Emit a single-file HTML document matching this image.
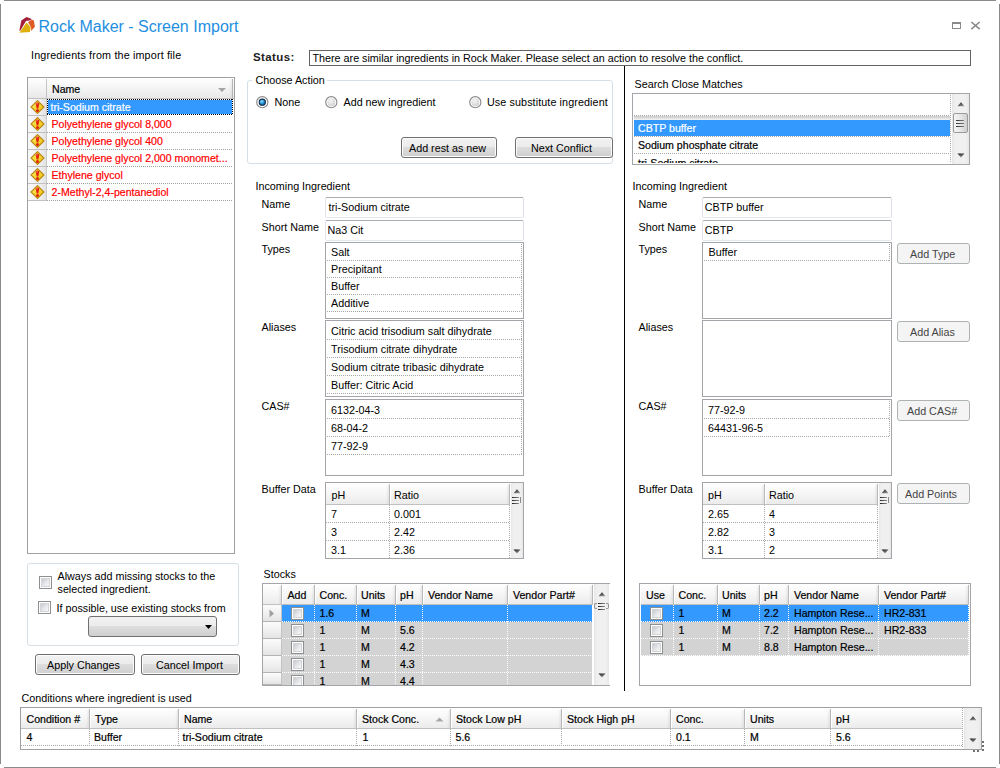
<!DOCTYPE html>
<html><head><meta charset="utf-8"><style>
html,body{margin:0;padding:0;width:1000px;height:768px;overflow:hidden;background:#fff;position:relative}
.a{position:absolute}
.u{position:absolute;font-family:"Liberation Sans",sans-serif;font-size:10.75px;line-height:10.75px;white-space:nowrap;color:#000}
.g{position:absolute;font-family:"Liberation Sans",sans-serif;font-size:10.6px;line-height:10.6px;white-space:nowrap;color:#000;-webkit-text-stroke:0.2px currentColor}
div{font-family:"Liberation Sans",sans-serif}
</style></head><body>
<div class="a" style="left:4px;top:0px;width:992px;height:1px;background:#8a8a8a"></div>
<div class="a" style="left:4px;top:767px;width:992px;height:1px;background:#8a8a8a"></div>
<div class="a" style="left:0px;top:4px;width:1px;height:760px;background:#8a8a8a"></div>
<div class="a" style="left:999px;top:4px;width:1px;height:760px;background:#8a8a8a"></div>
<svg class="a" style="left:17px;top:15px" width="20" height="20" viewBox="0 0 20 20">
<polygon points="2.3,15.8 4.3,5.6 9.5,2.1 14.8,4.1 13.6,5.2 9,6.1 3.4,15.6" fill="#a21f3c"/>
<polygon points="11,7.1 15,4.8 16.9,5.5 17.9,11.8 14.2,15.9 14.1,12.4" fill="#e05a24"/>
<polygon points="2.4,17.7 9.5,7.6 13.6,12.3 13,17.1" fill="#ddb00d"/>
</svg>
<div class="a" style="left:38.5px;top:16.5px;font-size:16px;color:#1e8fe0;white-space:nowrap;line-height:19px">Rock Maker - Screen Import</div>
<div class="a" style="left:952px;top:22px;width:9px;height:7px;border:1px solid #8a8a8a;border-top-width:2px;box-sizing:border-box"></div>
<svg class="a" style="left:970px;top:21px" width="11" height="9" viewBox="0 0 11 9"><path d="M1.3 1 L9.7 8.2 M9.7 1 L1.3 8.2" stroke="#8a8a8a" stroke-width="1.6"/></svg>
<div class="u" style="left:31px;top:50.00px;letter-spacing:0.16px">Ingredients from the import file</div>
<div class="a" style="left:27px;top:77px;width:208px;height:477px;border:1px solid #a0a0a0;box-sizing:border-box;background:#fff"></div>
<div class="a" style="left:28px;top:78px;width:206px;height:21px;background:linear-gradient(#ffffff,#f4f4f4 50%,#e8e8e8);border-bottom:1px solid #c0c0c0;box-sizing:border-box"></div>
<div class="a" style="left:46px;top:79px;width:1px;height:19px;background:#c4c4c4"></div>
<div class="a" style="left:229px;top:79px;width:3px;height:19px;background:linear-gradient(90deg,rgba(0,0,0,0),rgba(0,0,0,0.06))"></div>
<div class="a" style="left:232px;top:79px;width:1px;height:19px;background:#b4b4b4"></div>
<div class="g" style="left:52px;top:84.00px;">Name</div>
<svg class="a" style="left:217.5px;top:88px" width="9" height="5"><path d="M0 0 L8 0 L4 4 Z" fill="#a4a4a4"/></svg>
<div class="a" style="left:28px;top:99px;width:19px;height:17px;background:linear-gradient(90deg,#f8f8f8,#eeeeee 70%,#e2e2e2);border-bottom:1px solid #c0c0c0;border-right:1px solid #c8c8c8;box-sizing:border-box"></div>
<svg class="a" style="left:30px;top:100px" width="15" height="14" viewBox="0 0 15 14"><defs><linearGradient id="wg0" x1="0" y1="0" x2="1" y2="1"><stop offset="0" stop-color="#fff36a"/><stop offset="1" stop-color="#e8b800"/></linearGradient></defs><polygon points="7.5,0.6 14,7 7.5,13.4 1,7" fill="url(#wg0)" stroke="#b88410" stroke-width="1.1"/><path d="M5.6 3.6 Q7.5 1.6 9.4 3.6 L8.3 8.4 L6.7 8.4 Z" fill="#e2200e"/><circle cx="7.5" cy="10.4" r="1.5" fill="#e2200e"/><ellipse cx="7" cy="3.8" rx="0.8" ry="0.6" fill="#ff9a80"/></svg>
<div class="a" style="left:47px;top:99px;width:186px;height:16px;background:#3399ff"></div>
<div class="a" style="left:47px;top:99px;width:186px;height:16px;border:1px solid #fff;box-sizing:border-box"></div>
<div class="a" style="left:47px;top:99px;width:186px;height:1px;background:repeating-linear-gradient(90deg,#000 0 1px,transparent 1px 2px)"></div>
<div class="a" style="left:47px;top:114px;width:186px;height:1px;background:repeating-linear-gradient(90deg,#000 0 1px,transparent 1px 2px)"></div>
<div class="a" style="left:47px;top:99px;width:1px;height:16px;background:repeating-linear-gradient(180deg,#000 0 1px,transparent 1px 2px)"></div>
<div class="a" style="left:232px;top:99px;width:1px;height:16px;background:repeating-linear-gradient(180deg,#000 0 1px,transparent 1px 2px)"></div>
<div class="g" style="left:50.5px;top:102.00px;color:#fff">tri-Sodium citrate</div>
<div class="a" style="left:28px;top:116px;width:19px;height:17px;background:linear-gradient(90deg,#f8f8f8,#eeeeee 70%,#e2e2e2);border-bottom:1px solid #c0c0c0;border-right:1px solid #c8c8c8;box-sizing:border-box"></div>
<svg class="a" style="left:30px;top:117px" width="15" height="14" viewBox="0 0 15 14"><defs><linearGradient id="wg1" x1="0" y1="0" x2="1" y2="1"><stop offset="0" stop-color="#fff36a"/><stop offset="1" stop-color="#e8b800"/></linearGradient></defs><polygon points="7.5,0.6 14,7 7.5,13.4 1,7" fill="url(#wg1)" stroke="#b88410" stroke-width="1.1"/><path d="M5.6 3.6 Q7.5 1.6 9.4 3.6 L8.3 8.4 L6.7 8.4 Z" fill="#e2200e"/><circle cx="7.5" cy="10.4" r="1.5" fill="#e2200e"/><ellipse cx="7" cy="3.8" rx="0.8" ry="0.6" fill="#ff9a80"/></svg>
<div class="a" style="left:47px;top:132px;width:186px;height:1px;background:repeating-linear-gradient(90deg,#a0a0a0 0 1px,transparent 1px 2px)"></div>
<div class="g" style="left:51.5px;top:119.00px;color:#ff0000">Polyethylene glycol 8,000</div>
<div class="a" style="left:28px;top:133px;width:19px;height:17px;background:linear-gradient(90deg,#f8f8f8,#eeeeee 70%,#e2e2e2);border-bottom:1px solid #c0c0c0;border-right:1px solid #c8c8c8;box-sizing:border-box"></div>
<svg class="a" style="left:30px;top:134px" width="15" height="14" viewBox="0 0 15 14"><defs><linearGradient id="wg2" x1="0" y1="0" x2="1" y2="1"><stop offset="0" stop-color="#fff36a"/><stop offset="1" stop-color="#e8b800"/></linearGradient></defs><polygon points="7.5,0.6 14,7 7.5,13.4 1,7" fill="url(#wg2)" stroke="#b88410" stroke-width="1.1"/><path d="M5.6 3.6 Q7.5 1.6 9.4 3.6 L8.3 8.4 L6.7 8.4 Z" fill="#e2200e"/><circle cx="7.5" cy="10.4" r="1.5" fill="#e2200e"/><ellipse cx="7" cy="3.8" rx="0.8" ry="0.6" fill="#ff9a80"/></svg>
<div class="a" style="left:47px;top:149px;width:186px;height:1px;background:repeating-linear-gradient(90deg,#a0a0a0 0 1px,transparent 1px 2px)"></div>
<div class="g" style="left:51.5px;top:136.00px;color:#ff0000">Polyethylene glycol 400</div>
<div class="a" style="left:28px;top:150px;width:19px;height:17px;background:linear-gradient(90deg,#f8f8f8,#eeeeee 70%,#e2e2e2);border-bottom:1px solid #c0c0c0;border-right:1px solid #c8c8c8;box-sizing:border-box"></div>
<svg class="a" style="left:30px;top:151px" width="15" height="14" viewBox="0 0 15 14"><defs><linearGradient id="wg3" x1="0" y1="0" x2="1" y2="1"><stop offset="0" stop-color="#fff36a"/><stop offset="1" stop-color="#e8b800"/></linearGradient></defs><polygon points="7.5,0.6 14,7 7.5,13.4 1,7" fill="url(#wg3)" stroke="#b88410" stroke-width="1.1"/><path d="M5.6 3.6 Q7.5 1.6 9.4 3.6 L8.3 8.4 L6.7 8.4 Z" fill="#e2200e"/><circle cx="7.5" cy="10.4" r="1.5" fill="#e2200e"/><ellipse cx="7" cy="3.8" rx="0.8" ry="0.6" fill="#ff9a80"/></svg>
<div class="a" style="left:47px;top:166px;width:186px;height:1px;background:repeating-linear-gradient(90deg,#a0a0a0 0 1px,transparent 1px 2px)"></div>
<div class="g" style="left:51.5px;top:153.00px;color:#ff0000">Polyethylene glycol 2,000 monomet...</div>
<div class="a" style="left:28px;top:167px;width:19px;height:17px;background:linear-gradient(90deg,#f8f8f8,#eeeeee 70%,#e2e2e2);border-bottom:1px solid #c0c0c0;border-right:1px solid #c8c8c8;box-sizing:border-box"></div>
<svg class="a" style="left:30px;top:168px" width="15" height="14" viewBox="0 0 15 14"><defs><linearGradient id="wg4" x1="0" y1="0" x2="1" y2="1"><stop offset="0" stop-color="#fff36a"/><stop offset="1" stop-color="#e8b800"/></linearGradient></defs><polygon points="7.5,0.6 14,7 7.5,13.4 1,7" fill="url(#wg4)" stroke="#b88410" stroke-width="1.1"/><path d="M5.6 3.6 Q7.5 1.6 9.4 3.6 L8.3 8.4 L6.7 8.4 Z" fill="#e2200e"/><circle cx="7.5" cy="10.4" r="1.5" fill="#e2200e"/><ellipse cx="7" cy="3.8" rx="0.8" ry="0.6" fill="#ff9a80"/></svg>
<div class="a" style="left:47px;top:183px;width:186px;height:1px;background:repeating-linear-gradient(90deg,#a0a0a0 0 1px,transparent 1px 2px)"></div>
<div class="g" style="left:51.5px;top:170.00px;color:#ff0000">Ethylene glycol</div>
<div class="a" style="left:28px;top:184px;width:19px;height:17px;background:linear-gradient(90deg,#f8f8f8,#eeeeee 70%,#e2e2e2);border-bottom:1px solid #c0c0c0;border-right:1px solid #c8c8c8;box-sizing:border-box"></div>
<svg class="a" style="left:30px;top:185px" width="15" height="14" viewBox="0 0 15 14"><defs><linearGradient id="wg5" x1="0" y1="0" x2="1" y2="1"><stop offset="0" stop-color="#fff36a"/><stop offset="1" stop-color="#e8b800"/></linearGradient></defs><polygon points="7.5,0.6 14,7 7.5,13.4 1,7" fill="url(#wg5)" stroke="#b88410" stroke-width="1.1"/><path d="M5.6 3.6 Q7.5 1.6 9.4 3.6 L8.3 8.4 L6.7 8.4 Z" fill="#e2200e"/><circle cx="7.5" cy="10.4" r="1.5" fill="#e2200e"/><ellipse cx="7" cy="3.8" rx="0.8" ry="0.6" fill="#ff9a80"/></svg>
<div class="a" style="left:47px;top:200px;width:186px;height:1px;background:repeating-linear-gradient(90deg,#a0a0a0 0 1px,transparent 1px 2px)"></div>
<div class="g" style="left:51.5px;top:187.00px;color:#ff0000">2-Methyl-2,4-pentanediol</div>
<div class="a" style="left:27px;top:563px;width:212px;height:83px;border:1px solid #d5dfe5;border-radius:3px;box-sizing:border-box"></div>
<div class="a" style="left:39px;top:576px;width:13px;height:13px;border:1px solid #8e8f8f;box-sizing:border-box;background:#fff"></div>
<div class="a" style="left:41px;top:578px;width:9px;height:9px;background:linear-gradient(135deg,#c6cad0,#e9eaec 60%,#f6f6f7);border:1px solid #d2d4d8;box-sizing:border-box"></div>
<div class="u" style="left:57.5px;top:571.00px;">Always add missing stocks to the</div>
<div class="u" style="left:57.5px;top:584.00px;">selected ingredient.</div>
<div class="a" style="left:38px;top:601px;width:13px;height:13px;border:1px solid #8e8f8f;box-sizing:border-box;background:#fff"></div>
<div class="a" style="left:40px;top:603px;width:9px;height:9px;background:linear-gradient(135deg,#c6cad0,#e9eaec 60%,#f6f6f7);border:1px solid #d2d4d8;box-sizing:border-box"></div>
<div class="u" style="left:56.5px;top:603.00px;">If possible, use existing stocks from</div>
<div class="a" style="left:88px;top:616px;width:129px;height:21px;border:1px solid #707070;border-radius:3px;box-sizing:border-box;background:linear-gradient(#f2f2f2 0,#ebebeb 50%,#dddddd 50%,#cfcfcf)"></div>
<svg class="a" style="left:205px;top:625px" width="8" height="5"><path d="M0 0 L7 0 L3.5 4 Z" fill="#000"/></svg>
<div class="a" style="left:35px;top:654px;width:100px;height:21px;border:1px solid #707070;border-radius:3px;box-sizing:border-box;background:linear-gradient(#f2f2f2 0,#ebebeb 50%,#dddddd 50%,#cfcfcf);box-shadow:inset 0 0 0 1px #fcfcfc"></div>
<div class="u" style="left:47px;top:660.00px;">Apply Changes</div>
<div class="a" style="left:141px;top:654px;width:99px;height:21px;border:1px solid #707070;border-radius:3px;box-sizing:border-box;background:linear-gradient(#f2f2f2 0,#ebebeb 50%,#dddddd 50%,#cfcfcf);box-shadow:inset 0 0 0 1px #fcfcfc"></div>
<div class="u" style="left:156px;top:660.00px;">Cancel Import</div>
<div class="u" style="left:21.5px;top:693.00px;">Conditions where ingredient is used</div>
<div class="a" style="left:253px;top:51px;font-family:Liberation Sans;font-size:11.5px;line-height:12px;font-weight:bold;letter-spacing:0.4px;color:#222;white-space:nowrap">Status:</div>
<div class="a" style="left:309px;top:50px;width:662px;height:16px;border:1px solid #646464;box-sizing:border-box"></div>
<div class="u" style="left:312.5px;top:53.00px;">There are similar ingredients in Rock Maker. Please select an action to resolve the conflict.</div>
<div class="a" style="left:247px;top:80px;width:366px;height:84px;border:1px solid #d5dfe5;border-radius:3px;box-sizing:border-box"></div>
<div class="a" style="left:252px;top:72px;width:75px;height:14px;background:#fff"></div>
<div class="u" style="left:255.5px;top:75.00px;">Choose Action</div>
<svg width="0" height="0" style="position:absolute"><defs><radialGradient id="rg" cx="0.4" cy="0.35" r="0.7"><stop offset="0" stop-color="#8fe0ff"/><stop offset="0.6" stop-color="#1a8fd8"/><stop offset="1" stop-color="#0f4d7a"/></radialGradient><radialGradient id="rg2" cx="0.4" cy="0.35" r="0.7"><stop offset="0" stop-color="#f5f5f5"/><stop offset="1" stop-color="#d0d0d0"/></radialGradient></defs></svg>
<svg class="a" style="left:256px;top:96px" width="13" height="13" viewBox="0 0 13 13"><circle cx="6.3" cy="6.2" r="5.6" fill="#fff" stroke="#8a8a8a" stroke-width="1.1"/><circle cx="6.3" cy="6.2" r="3.1" fill="url(#rg)" stroke="#15314d" stroke-width="1.1"/></svg>
<div class="u" style="left:274.5px;top:97.00px;">None</div>
<svg class="a" style="left:325px;top:96px" width="13" height="13" viewBox="0 0 13 13"><circle cx="6.3" cy="6.2" r="5.6" fill="#fff" stroke="#8a8a8a" stroke-width="1.1"/><circle cx="6.3" cy="6.2" r="4" fill="url(#rg2)"/></svg>
<div class="u" style="left:343.5px;top:97.00px;">Add new ingredient</div>
<svg class="a" style="left:469px;top:96px" width="13" height="13" viewBox="0 0 13 13"><circle cx="6.3" cy="6.2" r="5.6" fill="#fff" stroke="#8a8a8a" stroke-width="1.1"/><circle cx="6.3" cy="6.2" r="4" fill="url(#rg2)"/></svg>
<div class="u" style="left:487px;top:97.00px;letter-spacing:0.1px">Use substitute ingredient</div>
<div class="a" style="left:401px;top:137px;width:96px;height:21px;border:1px solid #707070;border-radius:3px;box-sizing:border-box;background:linear-gradient(#f2f2f2 0,#ebebeb 50%,#dddddd 50%,#cfcfcf);box-shadow:inset 0 0 0 1px #fcfcfc"></div>
<div class="u" style="left:409px;top:143.00px;">Add rest as new</div>
<div class="a" style="left:515px;top:137px;width:98px;height:21px;border:1px solid #707070;border-radius:3px;box-sizing:border-box;background:linear-gradient(#f2f2f2 0,#ebebeb 50%,#dddddd 50%,#cfcfcf);box-shadow:inset 0 0 0 1px #fcfcfc"></div>
<div class="u" style="left:531px;top:143.00px;">Next Conflict</div>
<div class="a" style="left:624px;top:66px;width:1px;height:625px;background:#000"></div>
<div class="u" style="left:255.5px;top:181.00px;">Incoming Ingredient</div>
<div class="u" style="left:261.5px;top:199.00px;">Name</div>
<div class="a" style="left:325px;top:197px;width:199px;height:21px;border:1px solid;border-color:#abadb3 #dbdfe6 #e3e9ef #e2e3ea;border-radius:2px;box-sizing:border-box;background:#fff"></div>
<div class="u" style="left:328.5px;top:202.00px;">tri-Sodium citrate</div>
<div class="u" style="left:261.5px;top:222.00px;">Short Name</div>
<div class="a" style="left:325px;top:220px;width:199px;height:21px;border:1px solid;border-color:#abadb3 #dbdfe6 #e3e9ef #e2e3ea;border-radius:2px;box-sizing:border-box;background:#fff"></div>
<div class="u" style="left:327.5px;top:225.00px;">Na3 Cit</div>
<div class="u" style="left:261.5px;top:244.00px;">Types</div>
<div class="a" style="left:325px;top:242px;width:199px;height:77px;border:1px solid #a3a5ab;box-sizing:border-box;background:#fff"></div>
<div class="u" style="left:331px;top:247.00px;">Salt</div>
<div class="a" style="left:327px;top:260px;width:195px;height:1px;background:repeating-linear-gradient(90deg,#a8a8a8 0 1px,transparent 1px 2px)"></div>
<div class="u" style="left:331px;top:264.00px;">Precipitant</div>
<div class="a" style="left:327px;top:277px;width:195px;height:1px;background:repeating-linear-gradient(90deg,#a8a8a8 0 1px,transparent 1px 2px)"></div>
<div class="u" style="left:331px;top:281.00px;">Buffer</div>
<div class="a" style="left:327px;top:294px;width:195px;height:1px;background:repeating-linear-gradient(90deg,#a8a8a8 0 1px,transparent 1px 2px)"></div>
<div class="u" style="left:331px;top:298.00px;">Additive</div>
<div class="a" style="left:327px;top:311px;width:195px;height:1px;background:repeating-linear-gradient(90deg,#a8a8a8 0 1px,transparent 1px 2px)"></div>
<div class="a" style="left:521px;top:244px;width:1px;height:68px;background:repeating-linear-gradient(180deg,#a8a8a8 0 1px,transparent 1px 2px)"></div>
<div class="u" style="left:261.5px;top:322.00px;">Aliases</div>
<div class="a" style="left:325px;top:320px;width:199px;height:77px;border:1px solid #a3a5ab;box-sizing:border-box;background:#fff"></div>
<div class="u" style="left:331px;top:326.00px;">Citric acid trisodium salt dihydrate</div>
<div class="a" style="left:327px;top:339px;width:195px;height:1px;background:repeating-linear-gradient(90deg,#a8a8a8 0 1px,transparent 1px 2px)"></div>
<div class="u" style="left:331px;top:344.00px;">Trisodium citrate dihydrate</div>
<div class="a" style="left:327px;top:357px;width:195px;height:1px;background:repeating-linear-gradient(90deg,#a8a8a8 0 1px,transparent 1px 2px)"></div>
<div class="u" style="left:331px;top:362.00px;">Sodium citrate tribasic dihydrate</div>
<div class="a" style="left:327px;top:375px;width:195px;height:1px;background:repeating-linear-gradient(90deg,#a8a8a8 0 1px,transparent 1px 2px)"></div>
<div class="u" style="left:331px;top:380.00px;">Buffer: Citric Acid</div>
<div class="a" style="left:327px;top:393px;width:195px;height:1px;background:repeating-linear-gradient(90deg,#a8a8a8 0 1px,transparent 1px 2px)"></div>
<div class="a" style="left:521px;top:322px;width:1px;height:72px;background:repeating-linear-gradient(180deg,#a8a8a8 0 1px,transparent 1px 2px)"></div>
<div class="u" style="left:261.5px;top:401.00px;">CAS#</div>
<div class="a" style="left:325px;top:399px;width:199px;height:77px;border:1px solid #a3a5ab;box-sizing:border-box;background:#fff"></div>
<div class="u" style="left:331px;top:405.00px;">6132-04-3</div>
<div class="a" style="left:327px;top:418px;width:195px;height:1px;background:repeating-linear-gradient(90deg,#a8a8a8 0 1px,transparent 1px 2px)"></div>
<div class="u" style="left:331px;top:423.00px;">68-04-2</div>
<div class="a" style="left:327px;top:436px;width:195px;height:1px;background:repeating-linear-gradient(90deg,#a8a8a8 0 1px,transparent 1px 2px)"></div>
<div class="u" style="left:331px;top:441.00px;">77-92-9</div>
<div class="a" style="left:327px;top:454px;width:195px;height:1px;background:repeating-linear-gradient(90deg,#a8a8a8 0 1px,transparent 1px 2px)"></div>
<div class="a" style="left:521px;top:401px;width:1px;height:54px;background:repeating-linear-gradient(180deg,#a8a8a8 0 1px,transparent 1px 2px)"></div>
<div class="u" style="left:261.5px;top:484.00px;">Buffer Data</div>
<div class="a" style="left:325px;top:482px;width:199px;height:77px;border:1px solid #a3a5ab;box-sizing:border-box;background:#fff"></div>
<div class="a" style="left:326px;top:483px;width:184px;height:22px;background:linear-gradient(#ffffff,#f7f7f7 45%,#ebebeb 100%);border-bottom:1px solid #c0c0c0;box-sizing:border-box"></div>
<div class="a" style="left:386px;top:485px;width:3px;height:19px;background:linear-gradient(90deg,rgba(0,0,0,0),rgba(0,0,0,0.07))"></div>
<div class="a" style="left:389px;top:484px;width:1px;height:20px;background:#b8b8b8"></div>
<div class="a" style="left:390px;top:484px;width:1px;height:20px;background:#ffffff"></div>
<div class="a" style="left:506px;top:485px;width:3px;height:19px;background:linear-gradient(90deg,rgba(0,0,0,0),rgba(0,0,0,0.07))"></div>
<div class="a" style="left:509px;top:484px;width:1px;height:20px;background:#b8b8b8"></div>
<div class="a" style="left:510px;top:484px;width:1px;height:20px;background:#ffffff"></div>
<div class="u" style="left:331.5px;top:490.00px;">pH</div>
<div class="u" style="left:394px;top:490.00px;">Ratio</div>
<div class="u" style="left:331px;top:509.00px;">7</div>
<div class="u" style="left:394px;top:509.00px;">0.001</div>
<div class="a" style="left:326px;top:522px;width:184px;height:1px;background:repeating-linear-gradient(90deg,#a8a8a8 0 1px,transparent 1px 2px)"></div>
<div class="u" style="left:331px;top:527.00px;">3</div>
<div class="u" style="left:394px;top:527.00px;">2.42</div>
<div class="a" style="left:326px;top:540px;width:184px;height:1px;background:repeating-linear-gradient(90deg,#a8a8a8 0 1px,transparent 1px 2px)"></div>
<div class="u" style="left:331px;top:545.00px;">3.1</div>
<div class="u" style="left:394px;top:545.00px;">2.36</div>
<div class="a" style="left:389px;top:505px;width:1px;height:53px;background:repeating-linear-gradient(180deg,#a8a8a8 0 1px,transparent 1px 2px)"></div>
<div class="a" style="left:511px;top:483px;width:12px;height:75px;background:linear-gradient(90deg,#e6e6e6,#f0f0f0 20%,#f0f0f0 80%,#e6e6e6)"></div>
<svg class="a" style="left:513.0px;top:489px" width="8" height="5"><defs><linearGradient id="ua489" x1="0" y1="0" x2="0.6" y2="1"><stop offset="0" stop-color="#101010"/><stop offset="1" stop-color="#909090"/></linearGradient></defs><path d="M0.5 4.3 L4 0.3 L7.5 4.3 Z" fill="url(#ua489)"/></svg>
<svg class="a" style="left:513.0px;top:549px" width="8" height="5"><defs><linearGradient id="da549" x1="0" y1="0" x2="0.6" y2="1"><stop offset="0" stop-color="#101010"/><stop offset="1" stop-color="#a0a0a0"/></linearGradient></defs><path d="M0.5 0.5 L7.5 0.5 L4 4.5 Z" fill="url(#da549)"/></svg>
<div class="a" style="left:512px;top:497px;width:7px;height:1px;background:linear-gradient(90deg,#202020,#909090)"></div>
<div class="a" style="left:512px;top:500px;width:7px;height:1px;background:linear-gradient(90deg,#202020,#909090)"></div>
<div class="a" style="left:512px;top:503px;width:7px;height:1px;background:linear-gradient(90deg,#202020,#909090)"></div>
<div class="a" style="left:520px;top:497px;width:1px;height:6px;background:#8a8a8a"></div>
<div class="a" style="left:509px;top:505px;width:1px;height:53px;background:repeating-linear-gradient(180deg,#a8a8a8 0 1px,transparent 1px 2px)"></div>
<div class="u" style="left:263.5px;top:569.00px;">Stocks</div>
<div class="a" style="left:262px;top:583px;width:348px;height:103px;border:1px solid #a3a5ab;border-right:none;box-sizing:border-box;background:#fff"></div>
<div class="a" style="left:263px;top:584px;width:330px;height:21px;background:linear-gradient(#ffffff,#f7f7f7 45%,#ebebeb 100%);border-bottom:1px solid #c0c0c0;box-sizing:border-box"></div>
<div class="a" style="left:278px;top:586px;width:3px;height:18px;background:linear-gradient(90deg,rgba(0,0,0,0),rgba(0,0,0,0.07))"></div>
<div class="a" style="left:281px;top:585px;width:1px;height:19px;background:#b8b8b8"></div>
<div class="a" style="left:282px;top:585px;width:1px;height:19px;background:#ffffff"></div>
<div class="a" style="left:311px;top:586px;width:3px;height:18px;background:linear-gradient(90deg,rgba(0,0,0,0),rgba(0,0,0,0.07))"></div>
<div class="a" style="left:314px;top:585px;width:1px;height:19px;background:#b8b8b8"></div>
<div class="a" style="left:315px;top:585px;width:1px;height:19px;background:#ffffff"></div>
<div class="a" style="left:353px;top:586px;width:3px;height:18px;background:linear-gradient(90deg,rgba(0,0,0,0),rgba(0,0,0,0.07))"></div>
<div class="a" style="left:356px;top:585px;width:1px;height:19px;background:#b8b8b8"></div>
<div class="a" style="left:357px;top:585px;width:1px;height:19px;background:#ffffff"></div>
<div class="a" style="left:392px;top:586px;width:3px;height:18px;background:linear-gradient(90deg,rgba(0,0,0,0),rgba(0,0,0,0.07))"></div>
<div class="a" style="left:395px;top:585px;width:1px;height:19px;background:#b8b8b8"></div>
<div class="a" style="left:396px;top:585px;width:1px;height:19px;background:#ffffff"></div>
<div class="a" style="left:419px;top:586px;width:3px;height:18px;background:linear-gradient(90deg,rgba(0,0,0,0),rgba(0,0,0,0.07))"></div>
<div class="a" style="left:422px;top:585px;width:1px;height:19px;background:#b8b8b8"></div>
<div class="a" style="left:423px;top:585px;width:1px;height:19px;background:#ffffff"></div>
<div class="a" style="left:504px;top:586px;width:3px;height:18px;background:linear-gradient(90deg,rgba(0,0,0,0),rgba(0,0,0,0.07))"></div>
<div class="a" style="left:507px;top:585px;width:1px;height:19px;background:#b8b8b8"></div>
<div class="a" style="left:508px;top:585px;width:1px;height:19px;background:#ffffff"></div>
<div class="a" style="left:589px;top:586px;width:3px;height:18px;background:linear-gradient(90deg,rgba(0,0,0,0),rgba(0,0,0,0.07))"></div>
<div class="a" style="left:592px;top:585px;width:1px;height:19px;background:#b8b8b8"></div>
<div class="a" style="left:593px;top:585px;width:1px;height:19px;background:#ffffff"></div>
<div class="g" style="left:287.5px;top:590.00px;">Add</div>
<div class="g" style="left:319.5px;top:590.00px;">Conc.</div>
<div class="g" style="left:361px;top:590.00px;">Units</div>
<div class="g" style="left:400px;top:590.00px;">pH</div>
<div class="g" style="left:428px;top:590.00px;">Vendor Name</div>
<div class="g" style="left:513px;top:590.00px;">Vendor Part#</div>
<div class="a" style="left:263px;top:605px;width:19px;height:17px;background:linear-gradient(#fbfbfb,#f0f0f0 55%,#e4e4e4);border-bottom:1px solid #b4b4b4;border-right:1px solid #c4c4c4;box-sizing:border-box"></div>
<div class="a" style="left:282px;top:605px;width:310px;height:17px;background:#3399ff"></div>
<div class="a" style="left:282px;top:621px;width:310px;height:1px;background:repeating-linear-gradient(90deg,#ffffff 0 1px,transparent 1px 2px)"></div>
<div class="a" style="left:291px;top:607px;width:13px;height:13px;border:1px solid #8e8f8f;box-sizing:border-box;background:#fff"></div>
<div class="a" style="left:293px;top:609px;width:9px;height:9px;background:linear-gradient(135deg,#c6cad0,#e9eaec 60%,#f6f6f7);border:1px solid #d2d4d8;box-sizing:border-box"></div>
<div class="g" style="left:319.5px;top:608.00px;">1.6</div>
<div class="g" style="left:361px;top:608.00px;">M</div>
<div class="g" style="left:400px;top:608.00px;"></div>
<div class="a" style="left:263px;top:622px;width:19px;height:17px;background:linear-gradient(#fbfbfb,#f0f0f0 55%,#e4e4e4);border-bottom:1px solid #b4b4b4;border-right:1px solid #c4c4c4;box-sizing:border-box"></div>
<div class="a" style="left:282px;top:622px;width:310px;height:17px;background:#d3d3d3"></div>
<div class="a" style="left:282px;top:638px;width:310px;height:1px;background:repeating-linear-gradient(90deg,#ffffff 0 1px,transparent 1px 2px)"></div>
<div class="a" style="left:291px;top:624px;width:13px;height:13px;border:1px solid #8e8f8f;box-sizing:border-box;background:#fff"></div>
<div class="a" style="left:293px;top:626px;width:9px;height:9px;background:linear-gradient(135deg,#c6cad0,#e9eaec 60%,#f6f6f7);border:1px solid #d2d4d8;box-sizing:border-box"></div>
<div class="g" style="left:319.5px;top:625.00px;">1</div>
<div class="g" style="left:361px;top:625.00px;">M</div>
<div class="g" style="left:400px;top:625.00px;">5.6</div>
<div class="a" style="left:263px;top:639px;width:19px;height:17px;background:linear-gradient(#fbfbfb,#f0f0f0 55%,#e4e4e4);border-bottom:1px solid #b4b4b4;border-right:1px solid #c4c4c4;box-sizing:border-box"></div>
<div class="a" style="left:282px;top:639px;width:310px;height:17px;background:#d3d3d3"></div>
<div class="a" style="left:282px;top:655px;width:310px;height:1px;background:repeating-linear-gradient(90deg,#ffffff 0 1px,transparent 1px 2px)"></div>
<div class="a" style="left:291px;top:641px;width:13px;height:13px;border:1px solid #8e8f8f;box-sizing:border-box;background:#fff"></div>
<div class="a" style="left:293px;top:643px;width:9px;height:9px;background:linear-gradient(135deg,#c6cad0,#e9eaec 60%,#f6f6f7);border:1px solid #d2d4d8;box-sizing:border-box"></div>
<div class="g" style="left:319.5px;top:642.00px;">1</div>
<div class="g" style="left:361px;top:642.00px;">M</div>
<div class="g" style="left:400px;top:642.00px;">4.2</div>
<div class="a" style="left:263px;top:656px;width:19px;height:17px;background:linear-gradient(#fbfbfb,#f0f0f0 55%,#e4e4e4);border-bottom:1px solid #b4b4b4;border-right:1px solid #c4c4c4;box-sizing:border-box"></div>
<div class="a" style="left:282px;top:656px;width:310px;height:17px;background:#d3d3d3"></div>
<div class="a" style="left:282px;top:672px;width:310px;height:1px;background:repeating-linear-gradient(90deg,#ffffff 0 1px,transparent 1px 2px)"></div>
<div class="a" style="left:291px;top:658px;width:13px;height:13px;border:1px solid #8e8f8f;box-sizing:border-box;background:#fff"></div>
<div class="a" style="left:293px;top:660px;width:9px;height:9px;background:linear-gradient(135deg,#c6cad0,#e9eaec 60%,#f6f6f7);border:1px solid #d2d4d8;box-sizing:border-box"></div>
<div class="g" style="left:319.5px;top:659.00px;">1</div>
<div class="g" style="left:361px;top:659.00px;">M</div>
<div class="g" style="left:400px;top:659.00px;">4.3</div>
<div class="a" style="left:263px;top:673px;width:19px;height:12px;background:linear-gradient(#fbfbfb,#f0f0f0 55%,#e4e4e4);border-bottom:1px solid #b4b4b4;border-right:1px solid #c4c4c4;box-sizing:border-box"></div>
<div class="a" style="left:282px;top:673px;width:310px;height:12px;background:#d3d3d3"></div>
<div class="a" style="left:282px;top:689px;width:310px;height:1px;background:repeating-linear-gradient(90deg,#ffffff 0 1px,transparent 1px 2px)"></div>
<div class="a" style="left:291px;top:675px;width:13px;height:13px;border:1px solid #8e8f8f;box-sizing:border-box;background:#fff"></div>
<div class="a" style="left:293px;top:677px;width:9px;height:9px;background:linear-gradient(135deg,#c6cad0,#e9eaec 60%,#f6f6f7);border:1px solid #d2d4d8;box-sizing:border-box"></div>
<div class="g" style="left:319.5px;top:676.00px;">1</div>
<div class="g" style="left:361px;top:676.00px;">M</div>
<div class="g" style="left:400px;top:676.00px;">4.4</div>
<div class="a" style="left:314px;top:605px;width:1px;height:80px;background:repeating-linear-gradient(180deg,#ffffff 0 1px,transparent 1px 2px)"></div>
<div class="a" style="left:356px;top:605px;width:1px;height:80px;background:repeating-linear-gradient(180deg,#ffffff 0 1px,transparent 1px 2px)"></div>
<div class="a" style="left:395px;top:605px;width:1px;height:80px;background:repeating-linear-gradient(180deg,#ffffff 0 1px,transparent 1px 2px)"></div>
<div class="a" style="left:422px;top:605px;width:1px;height:80px;background:repeating-linear-gradient(180deg,#ffffff 0 1px,transparent 1px 2px)"></div>
<div class="a" style="left:507px;top:605px;width:1px;height:80px;background:repeating-linear-gradient(180deg,#ffffff 0 1px,transparent 1px 2px)"></div>
<div class="a" style="left:592px;top:605px;width:1px;height:80px;background:repeating-linear-gradient(180deg,#ffffff 0 1px,transparent 1px 2px)"></div>
<svg class="a" style="left:269px;top:609px" width="6" height="9"><path d="M0.5 0.5 L5 4.5 L0.5 8.5 Z" fill="#a0a0a0"/></svg>
<div class="a" style="left:594px;top:584px;width:15px;height:101px;background:linear-gradient(90deg,#e6e6e6,#f0f0f0 20%,#f0f0f0 80%,#e6e6e6)"></div>
<svg class="a" style="left:597.5px;top:592px" width="8" height="5"><defs><linearGradient id="ua592" x1="0" y1="0" x2="0.6" y2="1"><stop offset="0" stop-color="#101010"/><stop offset="1" stop-color="#909090"/></linearGradient></defs><path d="M0.5 4.3 L4 0.3 L7.5 4.3 Z" fill="url(#ua592)"/></svg>
<svg class="a" style="left:597.5px;top:673px" width="8" height="5"><defs><linearGradient id="da673" x1="0" y1="0" x2="0.6" y2="1"><stop offset="0" stop-color="#101010"/><stop offset="1" stop-color="#a0a0a0"/></linearGradient></defs><path d="M0.5 0.5 L7.5 0.5 L4 4.5 Z" fill="url(#da673)"/></svg>
<div class="a" style="left:594px;top:603px;width:3px;height:6px;border:1px solid #909090;border-right:none;border-radius:2px 0 0 2px;box-sizing:border-box"></div>
<div class="a" style="left:598px;top:603px;width:7px;height:1px;background:linear-gradient(90deg,#202020,#909090)"></div>
<div class="a" style="left:598px;top:606px;width:7px;height:1px;background:linear-gradient(90deg,#202020,#909090)"></div>
<div class="a" style="left:598px;top:609px;width:7px;height:1px;background:linear-gradient(90deg,#202020,#909090)"></div>
<div class="a" style="left:606px;top:603px;width:3px;height:6px;border:1px solid #909090;border-left:none;border-radius:0 2px 2px 0;box-sizing:border-box"></div>
<div class="a" style="left:262px;top:685px;width:348px;height:1px;background:#a3a5ab"></div>
<div class="a" style="left:262px;top:686px;width:348px;height:4px;background:#fff"></div>
<div class="u" style="left:634.5px;top:79.00px;">Search Close Matches</div>
<div class="a" style="left:632px;top:93px;width:338px;height:72px;border:1px solid #a3a5ab;box-sizing:border-box;background:#fff"></div>
<div class="a" style="left:634px;top:115px;width:316px;height:1px;background:repeating-linear-gradient(90deg,#a8a8a8 0 1px,transparent 1px 2px)"></div>
<div class="a" style="left:634px;top:116px;width:316px;height:4px;background:linear-gradient(#c8c8c8,#f4f4f4)"></div>
<div class="a" style="left:634px;top:120px;width:316px;height:16px;background:#3399ff"></div>
<div class="a" style="left:634px;top:136px;width:316px;height:1px;background:repeating-linear-gradient(90deg,#a8a8a8 0 1px,transparent 1px 2px)"></div>
<div class="g" style="left:638px;top:123.00px;color:#fff">CBTP buffer</div>
<div class="g" style="left:638px;top:140.00px;">Sodium phosphate citrate</div>
<div class="a" style="left:634px;top:153px;width:316px;height:1px;background:repeating-linear-gradient(90deg,#a8a8a8 0 1px,transparent 1px 2px)"></div>
<div class="a" style="left:634px;top:154px;width:316px;height:9px;overflow:hidden"><div class="g" style="left:4px;top:3.5px">tri-Sodium citrate</div></div>
<div class="a" style="left:950px;top:95px;width:1px;height:68px;background:repeating-linear-gradient(180deg,#a8a8a8 0 1px,transparent 1px 2px)"></div>
<div class="a" style="left:952px;top:94px;width:17px;height:70px;background:linear-gradient(90deg,#e6e6e6,#f0f0f0 20%,#f0f0f0 80%,#e6e6e6)"></div>
<svg class="a" style="left:956.5px;top:102px" width="8" height="5"><defs><linearGradient id="ua102" x1="0" y1="0" x2="0.6" y2="1"><stop offset="0" stop-color="#101010"/><stop offset="1" stop-color="#909090"/></linearGradient></defs><path d="M0.5 4.3 L4 0.3 L7.5 4.3 Z" fill="url(#ua102)"/></svg>
<svg class="a" style="left:956.5px;top:153px" width="8" height="5"><defs><linearGradient id="da153" x1="0" y1="0" x2="0.6" y2="1"><stop offset="0" stop-color="#101010"/><stop offset="1" stop-color="#a0a0a0"/></linearGradient></defs><path d="M0.5 0.5 L7.5 0.5 L4 4.5 Z" fill="url(#da153)"/></svg>
<div class="a" style="left:953px;top:113px;width:15px;height:20px;border:1px solid #9a9a9a;border-radius:2px;box-sizing:border-box;background:linear-gradient(90deg,#f6f6f6,#e6e6e6 50%,#d0d0d0)"></div>
<div class="a" style="left:956.0px;top:119.5px;width:7.5px;height:1.0px;background:linear-gradient(90deg,#303030,#808080)"></div>
<div class="a" style="left:956.0px;top:122.5px;width:7.5px;height:1.0px;background:linear-gradient(90deg,#303030,#808080)"></div>
<div class="a" style="left:956.0px;top:125.5px;width:7.5px;height:1.0px;background:linear-gradient(90deg,#303030,#808080)"></div>
<div class="u" style="left:632.5px;top:181.00px;">Incoming Ingredient</div>
<div class="u" style="left:638.5px;top:199.00px;">Name</div>
<div class="a" style="left:702px;top:197px;width:190px;height:21px;border:1px solid;border-color:#abadb3 #dbdfe6 #e3e9ef #e2e3ea;border-radius:2px;box-sizing:border-box;background:#fff"></div>
<div class="u" style="left:704.8px;top:202.00px;">CBTP buffer</div>
<div class="u" style="left:638.5px;top:222.00px;">Short Name</div>
<div class="a" style="left:702px;top:220px;width:190px;height:21px;border:1px solid;border-color:#abadb3 #dbdfe6 #e3e9ef #e2e3ea;border-radius:2px;box-sizing:border-box;background:#fff"></div>
<div class="u" style="left:704.8px;top:225.00px;">CBTP</div>
<div class="u" style="left:638.5px;top:244.00px;">Types</div>
<div class="a" style="left:702px;top:242px;width:190px;height:77px;border:1px solid #a3a5ab;box-sizing:border-box;background:#fff"></div>
<div class="u" style="left:708.5px;top:247.00px;">Buffer</div>
<div class="a" style="left:704px;top:260px;width:186px;height:1px;background:repeating-linear-gradient(90deg,#a8a8a8 0 1px,transparent 1px 2px)"></div>
<div class="a" style="left:889px;top:244px;width:1px;height:17px;background:repeating-linear-gradient(180deg,#a8a8a8 0 1px,transparent 1px 2px)"></div>
<div class="a" style="left:897px;top:243px;width:73px;height:21px;border:1px solid #adb2b5;border-radius:3px;box-sizing:border-box;background:#f4f4f4"></div>
<div class="u" style="left:910px;top:249.00px;color:#444">Add Type</div>
<div class="u" style="left:638.5px;top:322.00px;">Aliases</div>
<div class="a" style="left:702px;top:320px;width:190px;height:77px;border:1px solid #a3a5ab;box-sizing:border-box;background:#fff"></div>
<div class="a" style="left:897px;top:321px;width:73px;height:21px;border:1px solid #adb2b5;border-radius:3px;box-sizing:border-box;background:#f4f4f4"></div>
<div class="u" style="left:910px;top:327.00px;color:#444">Add Alias</div>
<div class="u" style="left:638.5px;top:401.00px;">CAS#</div>
<div class="a" style="left:702px;top:399px;width:190px;height:77px;border:1px solid #a3a5ab;box-sizing:border-box;background:#fff"></div>
<div class="u" style="left:708px;top:405.00px;">77-92-9</div>
<div class="a" style="left:704px;top:418px;width:186px;height:1px;background:repeating-linear-gradient(90deg,#a8a8a8 0 1px,transparent 1px 2px)"></div>
<div class="u" style="left:708px;top:423.00px;">64431-96-5</div>
<div class="a" style="left:704px;top:436px;width:186px;height:1px;background:repeating-linear-gradient(90deg,#a8a8a8 0 1px,transparent 1px 2px)"></div>
<div class="a" style="left:889px;top:401px;width:1px;height:36px;background:repeating-linear-gradient(180deg,#a8a8a8 0 1px,transparent 1px 2px)"></div>
<div class="a" style="left:897px;top:400px;width:73px;height:21px;border:1px solid #adb2b5;border-radius:3px;box-sizing:border-box;background:#f4f4f4"></div>
<div class="u" style="left:907px;top:406.00px;color:#444">Add CAS#</div>
<div class="u" style="left:638.5px;top:484.00px;">Buffer Data</div>
<div class="a" style="left:702px;top:482px;width:190px;height:77px;border:1px solid #a3a5ab;box-sizing:border-box;background:#fff"></div>
<div class="a" style="left:703px;top:483px;width:175px;height:22px;background:linear-gradient(#ffffff,#f7f7f7 45%,#ebebeb 100%);border-bottom:1px solid #c0c0c0;box-sizing:border-box"></div>
<div class="a" style="left:761px;top:485px;width:3px;height:19px;background:linear-gradient(90deg,rgba(0,0,0,0),rgba(0,0,0,0.07))"></div>
<div class="a" style="left:764px;top:484px;width:1px;height:20px;background:#b8b8b8"></div>
<div class="a" style="left:765px;top:484px;width:1px;height:20px;background:#ffffff"></div>
<div class="a" style="left:874px;top:485px;width:3px;height:19px;background:linear-gradient(90deg,rgba(0,0,0,0),rgba(0,0,0,0.07))"></div>
<div class="a" style="left:877px;top:484px;width:1px;height:20px;background:#b8b8b8"></div>
<div class="a" style="left:878px;top:484px;width:1px;height:20px;background:#ffffff"></div>
<div class="u" style="left:708px;top:490.00px;">pH</div>
<div class="u" style="left:769px;top:490.00px;">Ratio</div>
<div class="u" style="left:708px;top:509.00px;">2.65</div>
<div class="u" style="left:769px;top:509.00px;">4</div>
<div class="a" style="left:703px;top:522px;width:175px;height:1px;background:repeating-linear-gradient(90deg,#a8a8a8 0 1px,transparent 1px 2px)"></div>
<div class="u" style="left:708px;top:527.00px;">2.82</div>
<div class="u" style="left:769px;top:527.00px;">3</div>
<div class="a" style="left:703px;top:540px;width:175px;height:1px;background:repeating-linear-gradient(90deg,#a8a8a8 0 1px,transparent 1px 2px)"></div>
<div class="u" style="left:708px;top:545.00px;">3.1</div>
<div class="u" style="left:769px;top:545.00px;">2</div>
<div class="a" style="left:764px;top:505px;width:1px;height:53px;background:repeating-linear-gradient(180deg,#a8a8a8 0 1px,transparent 1px 2px)"></div>
<div class="a" style="left:879px;top:483px;width:12px;height:75px;background:linear-gradient(90deg,#e6e6e6,#f0f0f0 20%,#f0f0f0 80%,#e6e6e6)"></div>
<svg class="a" style="left:881.0px;top:489px" width="8" height="5"><defs><linearGradient id="ua489" x1="0" y1="0" x2="0.6" y2="1"><stop offset="0" stop-color="#101010"/><stop offset="1" stop-color="#909090"/></linearGradient></defs><path d="M0.5 4.3 L4 0.3 L7.5 4.3 Z" fill="url(#ua489)"/></svg>
<svg class="a" style="left:881.0px;top:549px" width="8" height="5"><defs><linearGradient id="da549" x1="0" y1="0" x2="0.6" y2="1"><stop offset="0" stop-color="#101010"/><stop offset="1" stop-color="#a0a0a0"/></linearGradient></defs><path d="M0.5 0.5 L7.5 0.5 L4 4.5 Z" fill="url(#da549)"/></svg>
<div class="a" style="left:880px;top:497px;width:7px;height:1px;background:linear-gradient(90deg,#202020,#909090)"></div>
<div class="a" style="left:880px;top:500px;width:7px;height:1px;background:linear-gradient(90deg,#202020,#909090)"></div>
<div class="a" style="left:880px;top:503px;width:7px;height:1px;background:linear-gradient(90deg,#202020,#909090)"></div>
<div class="a" style="left:888px;top:497px;width:1px;height:6px;background:#8a8a8a"></div>
<div class="a" style="left:877px;top:505px;width:1px;height:53px;background:repeating-linear-gradient(180deg,#a8a8a8 0 1px,transparent 1px 2px)"></div>
<div class="a" style="left:897px;top:483px;width:73px;height:21px;border:1px solid #adb2b5;border-radius:3px;box-sizing:border-box;background:#f4f4f4"></div>
<div class="u" style="left:905px;top:489.00px;color:#444">Add Points</div>
<div class="a" style="left:639px;top:583px;width:332px;height:103px;border:1px solid #a3a5ab;box-sizing:border-box;background:#fff"></div>
<div class="a" style="left:641px;top:584px;width:328px;height:21px;background:linear-gradient(#ffffff,#f7f7f7 45%,#ebebeb 100%);border-bottom:1px solid #c0c0c0;box-sizing:border-box"></div>
<div class="a" style="left:670px;top:586px;width:3px;height:18px;background:linear-gradient(90deg,rgba(0,0,0,0),rgba(0,0,0,0.07))"></div>
<div class="a" style="left:673px;top:585px;width:1px;height:19px;background:#b8b8b8"></div>
<div class="a" style="left:674px;top:585px;width:1px;height:19px;background:#ffffff"></div>
<div class="a" style="left:714px;top:586px;width:3px;height:18px;background:linear-gradient(90deg,rgba(0,0,0,0),rgba(0,0,0,0.07))"></div>
<div class="a" style="left:717px;top:585px;width:1px;height:19px;background:#b8b8b8"></div>
<div class="a" style="left:718px;top:585px;width:1px;height:19px;background:#ffffff"></div>
<div class="a" style="left:756px;top:586px;width:3px;height:18px;background:linear-gradient(90deg,rgba(0,0,0,0),rgba(0,0,0,0.07))"></div>
<div class="a" style="left:759px;top:585px;width:1px;height:19px;background:#b8b8b8"></div>
<div class="a" style="left:760px;top:585px;width:1px;height:19px;background:#ffffff"></div>
<div class="a" style="left:785px;top:586px;width:3px;height:18px;background:linear-gradient(90deg,rgba(0,0,0,0),rgba(0,0,0,0.07))"></div>
<div class="a" style="left:788px;top:585px;width:1px;height:19px;background:#b8b8b8"></div>
<div class="a" style="left:789px;top:585px;width:1px;height:19px;background:#ffffff"></div>
<div class="a" style="left:875px;top:586px;width:3px;height:18px;background:linear-gradient(90deg,rgba(0,0,0,0),rgba(0,0,0,0.07))"></div>
<div class="a" style="left:878px;top:585px;width:1px;height:19px;background:#b8b8b8"></div>
<div class="a" style="left:879px;top:585px;width:1px;height:19px;background:#ffffff"></div>
<div class="a" style="left:965px;top:586px;width:3px;height:18px;background:linear-gradient(90deg,rgba(0,0,0,0),rgba(0,0,0,0.07))"></div>
<div class="a" style="left:968px;top:585px;width:1px;height:19px;background:#b8b8b8"></div>
<div class="a" style="left:969px;top:585px;width:1px;height:19px;background:#ffffff"></div>
<div class="g" style="left:646px;top:590.00px;">Use</div>
<div class="g" style="left:678.5px;top:590.00px;">Conc.</div>
<div class="g" style="left:722px;top:590.00px;">Units</div>
<div class="g" style="left:764px;top:590.00px;">pH</div>
<div class="g" style="left:794px;top:590.00px;">Vendor Name</div>
<div class="g" style="left:884px;top:590.00px;">Vendor Part#</div>
<div class="a" style="left:641px;top:605px;width:328px;height:17px;background:#3399ff"></div>
<div class="a" style="left:641px;top:621px;width:328px;height:1px;background:repeating-linear-gradient(90deg,#ffffff 0 1px,transparent 1px 2px)"></div>
<div class="a" style="left:650px;top:607px;width:13px;height:13px;border:1px solid #8e8f8f;box-sizing:border-box;background:#fff"></div>
<div class="a" style="left:652px;top:609px;width:9px;height:9px;background:linear-gradient(135deg,#c6cad0,#e9eaec 60%,#f6f6f7);border:1px solid #d2d4d8;box-sizing:border-box"></div>
<div class="g" style="left:678.5px;top:608.00px;">1</div>
<div class="g" style="left:722px;top:608.00px;">M</div>
<div class="g" style="left:764px;top:608.00px;">2.2</div>
<div class="g" style="left:794px;top:608.00px;">Hampton Rese...</div>
<div class="g" style="left:884px;top:608.00px;">HR2-831</div>
<div class="a" style="left:641px;top:622px;width:328px;height:17px;background:#d3d3d3"></div>
<div class="a" style="left:641px;top:638px;width:328px;height:1px;background:repeating-linear-gradient(90deg,#ffffff 0 1px,transparent 1px 2px)"></div>
<div class="a" style="left:650px;top:624px;width:13px;height:13px;border:1px solid #8e8f8f;box-sizing:border-box;background:#fff"></div>
<div class="a" style="left:652px;top:626px;width:9px;height:9px;background:linear-gradient(135deg,#c6cad0,#e9eaec 60%,#f6f6f7);border:1px solid #d2d4d8;box-sizing:border-box"></div>
<div class="g" style="left:678.5px;top:625.00px;">1</div>
<div class="g" style="left:722px;top:625.00px;">M</div>
<div class="g" style="left:764px;top:625.00px;">7.2</div>
<div class="g" style="left:794px;top:625.00px;">Hampton Rese...</div>
<div class="g" style="left:884px;top:625.00px;">HR2-833</div>
<div class="a" style="left:641px;top:639px;width:328px;height:17px;background:#d3d3d3"></div>
<div class="a" style="left:641px;top:655px;width:328px;height:1px;background:repeating-linear-gradient(90deg,#ffffff 0 1px,transparent 1px 2px)"></div>
<div class="a" style="left:650px;top:641px;width:13px;height:13px;border:1px solid #8e8f8f;box-sizing:border-box;background:#fff"></div>
<div class="a" style="left:652px;top:643px;width:9px;height:9px;background:linear-gradient(135deg,#c6cad0,#e9eaec 60%,#f6f6f7);border:1px solid #d2d4d8;box-sizing:border-box"></div>
<div class="g" style="left:678.5px;top:642.00px;">1</div>
<div class="g" style="left:722px;top:642.00px;">M</div>
<div class="g" style="left:764px;top:642.00px;">8.8</div>
<div class="g" style="left:794px;top:642.00px;">Hampton Rese...</div>
<div class="g" style="left:884px;top:642.00px;"></div>
<div class="a" style="left:673px;top:605px;width:1px;height:51px;background:repeating-linear-gradient(180deg,#ffffff 0 1px,transparent 1px 2px)"></div>
<div class="a" style="left:717px;top:605px;width:1px;height:51px;background:repeating-linear-gradient(180deg,#ffffff 0 1px,transparent 1px 2px)"></div>
<div class="a" style="left:759px;top:605px;width:1px;height:51px;background:repeating-linear-gradient(180deg,#ffffff 0 1px,transparent 1px 2px)"></div>
<div class="a" style="left:788px;top:605px;width:1px;height:51px;background:repeating-linear-gradient(180deg,#ffffff 0 1px,transparent 1px 2px)"></div>
<div class="a" style="left:878px;top:605px;width:1px;height:51px;background:repeating-linear-gradient(180deg,#ffffff 0 1px,transparent 1px 2px)"></div>
<div class="a" style="left:968px;top:605px;width:1px;height:51px;background:repeating-linear-gradient(180deg,#ffffff 0 1px,transparent 1px 2px)"></div>
<div class="a" style="left:20px;top:707px;width:962px;height:43px;border:1px solid #a0a0a0;box-sizing:border-box;background:#fff"></div>
<div class="a" style="left:21px;top:708px;width:941px;height:21px;background:linear-gradient(#ffffff,#f7f7f7 45%,#ebebeb 100%);border-bottom:1px solid #c0c0c0;box-sizing:border-box"></div>
<div class="a" style="left:86px;top:710px;width:3px;height:18px;background:linear-gradient(90deg,rgba(0,0,0,0),rgba(0,0,0,0.07))"></div>
<div class="a" style="left:89px;top:709px;width:1px;height:19px;background:#b8b8b8"></div>
<div class="a" style="left:90px;top:709px;width:1px;height:19px;background:#ffffff"></div>
<div class="a" style="left:175px;top:710px;width:3px;height:18px;background:linear-gradient(90deg,rgba(0,0,0,0),rgba(0,0,0,0.07))"></div>
<div class="a" style="left:178px;top:709px;width:1px;height:19px;background:#b8b8b8"></div>
<div class="a" style="left:179px;top:709px;width:1px;height:19px;background:#ffffff"></div>
<div class="a" style="left:353px;top:710px;width:3px;height:18px;background:linear-gradient(90deg,rgba(0,0,0,0),rgba(0,0,0,0.07))"></div>
<div class="a" style="left:356px;top:709px;width:1px;height:19px;background:#b8b8b8"></div>
<div class="a" style="left:357px;top:709px;width:1px;height:19px;background:#ffffff"></div>
<div class="a" style="left:447px;top:710px;width:3px;height:18px;background:linear-gradient(90deg,rgba(0,0,0,0),rgba(0,0,0,0.07))"></div>
<div class="a" style="left:450px;top:709px;width:1px;height:19px;background:#b8b8b8"></div>
<div class="a" style="left:451px;top:709px;width:1px;height:19px;background:#ffffff"></div>
<div class="a" style="left:558px;top:710px;width:3px;height:18px;background:linear-gradient(90deg,rgba(0,0,0,0),rgba(0,0,0,0.07))"></div>
<div class="a" style="left:561px;top:709px;width:1px;height:19px;background:#b8b8b8"></div>
<div class="a" style="left:562px;top:709px;width:1px;height:19px;background:#ffffff"></div>
<div class="a" style="left:667px;top:710px;width:3px;height:18px;background:linear-gradient(90deg,rgba(0,0,0,0),rgba(0,0,0,0.07))"></div>
<div class="a" style="left:670px;top:709px;width:1px;height:19px;background:#b8b8b8"></div>
<div class="a" style="left:671px;top:709px;width:1px;height:19px;background:#ffffff"></div>
<div class="a" style="left:741px;top:710px;width:3px;height:18px;background:linear-gradient(90deg,rgba(0,0,0,0),rgba(0,0,0,0.07))"></div>
<div class="a" style="left:744px;top:709px;width:1px;height:19px;background:#b8b8b8"></div>
<div class="a" style="left:745px;top:709px;width:1px;height:19px;background:#ffffff"></div>
<div class="a" style="left:827px;top:710px;width:3px;height:18px;background:linear-gradient(90deg,rgba(0,0,0,0),rgba(0,0,0,0.07))"></div>
<div class="a" style="left:830px;top:709px;width:1px;height:19px;background:#b8b8b8"></div>
<div class="a" style="left:831px;top:709px;width:1px;height:19px;background:#ffffff"></div>
<div class="g" style="left:26.5px;top:714.00px;">Condition #</div>
<div class="g" style="left:95px;top:714.00px;">Type</div>
<div class="g" style="left:184px;top:714.00px;">Name</div>
<div class="g" style="left:362px;top:714.00px;">Stock Conc.</div>
<div class="g" style="left:456px;top:714.00px;">Stock Low pH</div>
<div class="g" style="left:567px;top:714.00px;">Stock High pH</div>
<div class="g" style="left:676px;top:714.00px;">Conc.</div>
<div class="g" style="left:750px;top:714.00px;">Units</div>
<div class="g" style="left:836px;top:714.00px;">pH</div>
<svg class="a" style="left:435px;top:717px" width="9" height="5"><path d="M0.5 4.5 L4.5 0.5 L8.5 4.5 Z" fill="#a8a8a8"/></svg>
<div class="g" style="left:26.5px;top:732.00px;">4</div>
<div class="g" style="left:94px;top:732.00px;">Buffer</div>
<div class="g" style="left:182.5px;top:732.00px;">tri-Sodium citrate</div>
<div class="g" style="left:362.5px;top:732.00px;">1</div>
<div class="g" style="left:455.5px;top:732.00px;">5.6</div>
<div class="g" style="left:676px;top:732.00px;">0.1</div>
<div class="g" style="left:750px;top:732.00px;">M</div>
<div class="g" style="left:836px;top:732.00px;">5.6</div>
<div class="a" style="left:21px;top:745px;width:941px;height:1px;background:repeating-linear-gradient(90deg,#a8a8a8 0 1px,transparent 1px 2px)"></div>
<div class="a" style="left:89px;top:729px;width:1px;height:17px;background:repeating-linear-gradient(180deg,#a8a8a8 0 1px,transparent 1px 2px)"></div>
<div class="a" style="left:178px;top:729px;width:1px;height:17px;background:repeating-linear-gradient(180deg,#a8a8a8 0 1px,transparent 1px 2px)"></div>
<div class="a" style="left:356px;top:729px;width:1px;height:17px;background:repeating-linear-gradient(180deg,#a8a8a8 0 1px,transparent 1px 2px)"></div>
<div class="a" style="left:450px;top:729px;width:1px;height:17px;background:repeating-linear-gradient(180deg,#a8a8a8 0 1px,transparent 1px 2px)"></div>
<div class="a" style="left:561px;top:729px;width:1px;height:17px;background:repeating-linear-gradient(180deg,#a8a8a8 0 1px,transparent 1px 2px)"></div>
<div class="a" style="left:670px;top:729px;width:1px;height:17px;background:repeating-linear-gradient(180deg,#a8a8a8 0 1px,transparent 1px 2px)"></div>
<div class="a" style="left:744px;top:729px;width:1px;height:17px;background:repeating-linear-gradient(180deg,#a8a8a8 0 1px,transparent 1px 2px)"></div>
<div class="a" style="left:830px;top:729px;width:1px;height:17px;background:repeating-linear-gradient(180deg,#a8a8a8 0 1px,transparent 1px 2px)"></div>
<div class="a" style="left:962px;top:708px;width:1px;height:40px;background:repeating-linear-gradient(180deg,#a8a8a8 0 1px,transparent 1px 2px)"></div>
<div class="a" style="left:964px;top:708px;width:17px;height:41px;background:linear-gradient(90deg,#e6e6e6,#f0f0f0 20%,#f0f0f0 80%,#e6e6e6)"></div>
<svg class="a" style="left:968.5px;top:716px" width="8" height="5"><defs><linearGradient id="ua716" x1="0" y1="0" x2="0.6" y2="1"><stop offset="0" stop-color="#101010"/><stop offset="1" stop-color="#909090"/></linearGradient></defs><path d="M0.5 4.3 L4 0.3 L7.5 4.3 Z" fill="url(#ua716)"/></svg>
<svg class="a" style="left:968.5px;top:738px" width="8" height="5"><defs><linearGradient id="da738" x1="0" y1="0" x2="0.6" y2="1"><stop offset="0" stop-color="#101010"/><stop offset="1" stop-color="#a0a0a0"/></linearGradient></defs><path d="M0.5 0.5 L7.5 0.5 L4 4.5 Z" fill="url(#da738)"/></svg>
<div class="a" style="left:982px;top:741px;width:1.5px;height:1.5px;background:#707070"></div>
<div class="a" style="left:982px;top:745px;width:1.5px;height:1.5px;background:#707070"></div>
<div class="a" style="left:982px;top:749px;width:1.5px;height:1.5px;background:#707070"></div>
<div class="a" style="left:973px;top:750px;width:1.5px;height:1.5px;background:#707070"></div>
<div class="a" style="left:977px;top:750px;width:1.5px;height:1.5px;background:#707070"></div>
</body></html>
